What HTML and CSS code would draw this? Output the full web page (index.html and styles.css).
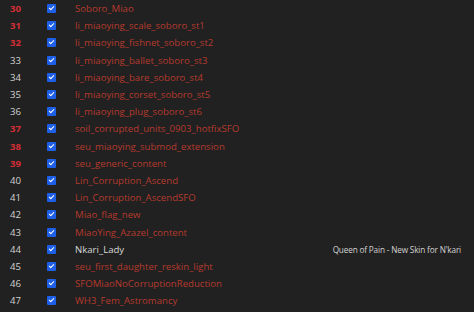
FILE: index.html
```html
<!DOCTYPE html>
<html lang="en">
<head>
  <meta charset="UTF-8" />
  <title>Mod list</title>
  <link rel="stylesheet" href="styles.css">
</head>
<body>
  <div id="mod-list">
    <div class="mod-row"><span class="num conflict">30</span><span class="check"></span><span class="name">Soboro_Miao</span></div>
    <div class="mod-row"><span class="num conflict">31</span><span class="check"></span><span class="name">li_miaoying_scale_soboro_st1</span></div>
    <div class="mod-row"><span class="num conflict">32</span><span class="check"></span><span class="name">li_miaoying_fishnet_soboro_st2</span></div>
    <div class="mod-row"><span class="num">33</span><span class="check"></span><span class="name">li_miaoying_ballet_soboro_st3</span></div>
    <div class="mod-row"><span class="num">34</span><span class="check"></span><span class="name">li_miaoying_bare_soboro_st4</span></div>
    <div class="mod-row"><span class="num">35</span><span class="check"></span><span class="name">li_miaoying_corset_soboro_st5</span></div>
    <div class="mod-row"><span class="num">36</span><span class="check"></span><span class="name">li_miaoying_plug_soboro_st6</span></div>
    <div class="mod-row"><span class="num conflict">37</span><span class="check"></span><span class="name">soil_corrupted_units_0903_hotfixSFO</span></div>
    <div class="mod-row"><span class="num conflict">38</span><span class="check"></span><span class="name">seu_miaoying_submod_extension</span></div>
    <div class="mod-row"><span class="num conflict">39</span><span class="check"></span><span class="name">seu_generic_content</span></div>
    <div class="mod-row"><span class="num">40</span><span class="check"></span><span class="name">Lin_Corruption_Ascend</span></div>
    <div class="mod-row"><span class="num">41</span><span class="check"></span><span class="name">Lin_Corruption_AscendSFO</span></div>
    <div class="mod-row"><span class="num">42</span><span class="check"></span><span class="name">Miao_flag_new</span></div>
    <div class="mod-row"><span class="num">43</span><span class="check"></span><span class="name">MiaoYing_Azazel_content</span></div>
    <div class="mod-row"><span class="num">44</span><span class="check"></span><span class="name ok">Nkari_Lady</span><span class="title">Queen of Pain - New Skin for N'kari</span></div>
    <div class="mod-row"><span class="num">45</span><span class="check"></span><span class="name">seu_first_daughter_reskin_light</span></div>
    <div class="mod-row"><span class="num">46</span><span class="check"></span><span class="name">SFOMiaoNoCorruptionReduction</span></div>
    <div class="mod-row"><span class="num">47</span><span class="check"></span><span class="name">WH3_Fem_Astromancy</span></div>
  </div>
</body>
</html>
```

FILE: styles.css
```css
body {
  margin: 0;
  background: #212121;
  font-family: 'Open Sans', sans-serif;
  font-size: 9.6px;
  color: #d4d4d4;
}
#mod-list {
  display: flex;
  flex-direction: column;
}
.mod-row {
  display: flex;
  align-items: center;
  height: 17.2px;
  white-space: nowrap;
}
.num {
  width: 10px;
  padding-left: 10px;
  color: #d2d2d2;
}
.num.conflict {
  color: #d42e36;
  font-weight: bold;
}
/* case cochée dessinée en CSS */
.check {
  position: relative;
  width: 9px;
  height: 9px;
  margin-left: 27px;
  background: #1d5fe6;
  border-radius: 1px;
}
.check::after {
  content: "";
  position: absolute;
  left: 3px;
  top: 1px;
  width: 2px;
  height: 4px;
  border: solid #fff;
  border-width: 0 1.3px 1.3px 0;
  transform: rotate(45deg);
}
.name {
  margin-left: 19px;
  color: #b53a2e;
}
.name.ok { color: #d8d8d8; }
.title {
  margin-left: auto;
  margin-right: 13px;
  font-size: 8.2px;
  letter-spacing: -0.15px;
  color: #d2d2d2;
}
```
